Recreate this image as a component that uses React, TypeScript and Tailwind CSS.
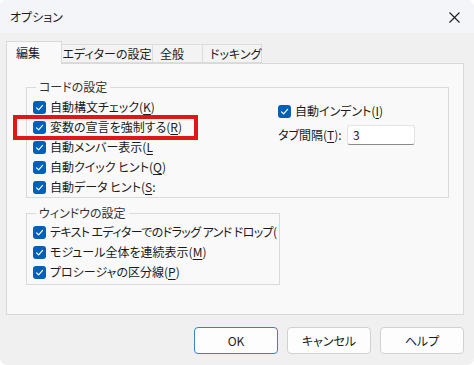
import React from 'react';

const font = { fontFamily: '"Noto Sans CJK JP", "Noto Sans", sans-serif' };

function Check() {
  return (
    <span className="flex h-[13px] w-[13px] shrink-0 items-center justify-center rounded-[3px] bg-[#005fb8]">
      <svg width="13" height="13" viewBox="0 0 13 13" fill="none">
        <path d="M3.6 6.8 L5.6 8.8 L9.6 4.4" stroke="white" strokeWidth="1.2" strokeLinecap="round" strokeLinejoin="round" />
      </svg>
    </span>
  );
}

function Label({ text, k, tail = ')' }: { text: string; k: string; tail?: string }) {
  return (
    <>
      {text}(<span className="underline underline-offset-2">{k}</span>{tail}
    </>
  );
}

function CheckRow({ children, className = '' }: { children: React.ReactNode; className?: string }) {
  return (
    <div className="flex h-[20px] items-center gap-[4px]">
      <Check />
      <span className={`whitespace-nowrap leading-[20px] ${className}`}>{children}</span>
    </div>
  );
}

export default function App() {
  return (
    <div className="relative h-[365px] w-[474px] overflow-hidden bg-white text-[12px] leading-[14px] text-[#1b1b1b] [font-feature-settings:'palt']" style={font}>
      <div className="flex h-full flex-col overflow-hidden rounded-[7px] bg-[#f0f0f0]">
        {/* title bar */}
        <div className="flex h-[33px] shrink-0 items-center justify-between bg-[#f4f5f8] pl-[10px] pr-[14px]">
          <span className="text-[12px]">オプション</span>
          <svg width="11" height="11" viewBox="0 0 11 11" className="mt-[1px]">
            <path d="M0.5 0.5 L10.5 10.5 M10.5 0.5 L0.5 10.5" stroke="#1b1b1b" strokeWidth="1.1" />
          </svg>
        </div>

        <div className="flex flex-1 flex-col pl-[6px] pr-[10px] pt-[8px]">
          {/* tabs */}
          <div className="flex h-[22px] items-end whitespace-nowrap">
            <div className="relative z-10 -mb-px flex h-[23px] w-[56px] items-center border border-b-0 border-[#d9d9d9] bg-[#f9f9f9] pl-[9px]">
              編集
            </div>
            <div className="flex h-[19px] w-[91px] items-center justify-center border-y border-r border-[#dcdcdc] bg-[#f3f3f3]">エディターの設定</div>
            <div className="flex h-[19px] w-[50px] items-center border-y border-r border-[#dcdcdc] bg-[#f3f3f3] pl-[7px]">全般</div>
            <div className="flex h-[19px] w-[59px] items-center border-y border-r border-[#dcdcdc] bg-[#f3f3f3] pl-[7px]">ドッキング</div>
          </div>

          {/* panel */}
          <div className="flex h-[252px] flex-col border border-[#d9d9d9] bg-[#f9f9f9] pl-[19px] pt-[16px]">
            <fieldset className="h-[118px] w-[423px] border border-[#dadada] pl-[6px]">
              <legend className="ml-[3px] px-[3px] leading-[14px] text-[#333]">コードの設定</legend>
              <div className="flex pt-[3px]">
                <div className="flex w-[245px] flex-col">
                  <CheckRow><Label text="自動構文チェック" k="K" /></CheckRow>
                  <CheckRow><Label text="変数の宣言を強制する" k="R" /></CheckRow>
                  <CheckRow><Label text="自動メンバー表示" k="L" tail="" /></CheckRow>
                  <CheckRow><Label text="自動クイック ヒント" k="Q" /></CheckRow>
                  <CheckRow><Label text="自動データ ヒント" k="S" tail=":" /></CheckRow>
                </div>
                <div className="flex flex-col pt-[4px]">
                  <CheckRow><Label text="自動インデント" k="I" /></CheckRow>
                  <div className="mt-[4px] flex items-center">
                    <span className="w-[69px] whitespace-nowrap leading-[20px]"><Label text="タブ間隔" k="T" tail="):" /></span>
                    <div className="flex h-[20px] w-[68px] items-center rounded-[3px] border border-[#e3e3e3] border-b-[#8a8a8a] bg-white pl-[5px]">3</div>
                  </div>
                </div>
              </div>
            </fieldset>

            <fieldset className="mt-[8px] h-[79px] w-[254px] border border-[#dadada] pl-[6px]">
              <legend className="ml-[3px] px-[3px] leading-[14px] text-[#333]">ウィンドウの設定</legend>
              <div className="flex flex-col pt-[2px]">
                <CheckRow className="tracking-[-0.6px]">テキスト エディターでのドラッグ アンド ドロップ(</CheckRow>
                <CheckRow><Label text="モジュール全体を連続表示" k="M" /></CheckRow>
                <CheckRow><Label text="プロシージャの区分線" k="P" /></CheckRow>
              </div>
            </fieldset>
          </div>

          {/* buttons */}
          <div className="mt-[12px] flex justify-end gap-[9px]">
            <button className="flex h-[27px] w-[84px] items-center justify-center rounded-[4px] border border-[#3d7fc6] bg-[#fdfdfd]">OK</button>
            <button className="flex h-[27px] w-[84px] items-center justify-center rounded-[4px] border border-[#d1d1d1] bg-[#fdfdfd]">キャンセル</button>
            <button className="flex h-[27px] w-[84px] items-center justify-center rounded-[4px] border border-[#d1d1d1] bg-[#fdfdfd]">ヘルプ</button>
          </div>
        </div>
      </div>

      {/* red highlight annotation */}
      <div className="absolute left-[13px] top-[115px] h-[25px] w-[185px] border-[4px] border-[#e3151c]" />
    </div>
  );
}
